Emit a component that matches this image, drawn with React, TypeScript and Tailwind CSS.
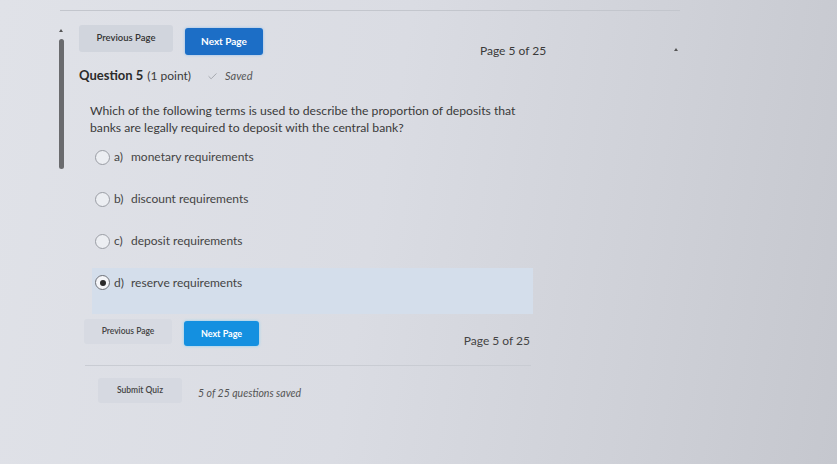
import React from "react";
import { Check } from "lucide-react";

const options = [
  { k: "a)", t: "monetary requirements" },
  { k: "b)", t: "discount requirements" },
  { k: "c)", t: "deposit requirements" },
];

function Radio({ on }: { on?: boolean }) {
  return (
    <div
      className={`w-[15px] h-[15px] rounded-full border flex items-center justify-center shrink-0 ${
        on ? "border-[#6d7077] bg-[#f4f5f8]" : "border-[#9a9da4] bg-[#eceef2]"
      }`}
    >
      {on && <div className="w-[6px] h-[6px] rounded-full bg-[#2a2a2a]" />}
    </div>
  );
}

export default function App() {
  return (
    <div className="w-[837px] h-[464px] overflow-hidden bg-[linear-gradient(100deg,#e0e2e8_0%,#dadce3_45%,#cfd1d8_75%,#c5c7ce_100%)] font-['Lato','Liberation_Sans',sans-serif] text-[#333]">
      <div className="pt-[10px] pl-[60px]">
        <div className="w-[620px] h-px bg-[#c3c6cd]" />
      </div>
      <div className="flex pl-[58px] pt-[14px]">
        {/* scrollbar */}
        <div className="w-[21px] flex flex-col items-start pl-[1px]">
          <div className="mt-[4px] w-0 h-0 border-l-[2.5px] border-r-[2.5px] border-b-[3px] border-l-transparent border-r-transparent border-b-[#555]" />
          <div className="mt-[7px] w-[5px] h-[130px] rounded-full bg-[#6a6b6e]" />
        </div>
        {/* content */}
        <div className="flex flex-col">
          <div className="flex items-start">
            <div className="w-[94px] h-[27px] rounded-[3px] bg-[#d1d5dd] flex items-center justify-center text-[9.5px] font-semibold text-[#333]">
              Previous Page
            </div>
            <div className="ml-[12px] mt-[3px] w-[78px] h-[27px] rounded-[3px] bg-[#1c6ec6] flex items-center justify-center text-[10px] font-bold text-white shadow-[0_0_3px_#8fbfee]">
              Next Page
            </div>
            <div className="ml-[217px] mt-[17px] text-[12px] text-[#3a3a3a]">Page 5 of 25</div>
            <div className="ml-[128px] mt-[23px] w-0 h-0 border-l-[2.5px] border-r-[2.5px] border-b-[3px] border-l-transparent border-r-transparent border-b-[#555]" />
          </div>

          <div className="mt-[7px] flex items-center h-[18px]">
            <span className="text-[13px] font-bold text-[#2b2b2b]">Question 5</span>
            <span className="ml-[4px] text-[12px] text-[#3a3a3a]">(1 point)</span>
            <Check size={11} strokeWidth={1.8} className="ml-[16px] text-[#9a9da3]" />
            <span className="ml-[7px] text-[11px] italic text-[#555]">Saved</span>
          </div>

          <div className="mt-[17px] ml-[11px] text-[12.2px] leading-[17px] text-[#3a3a3a]">
            Which of the following terms is used to describe the proportion of deposits that
            <br />
            banks are legally required to deposit with the central bank?
          </div>

          <div className="ml-[13px] w-[441px] flex flex-col">
            {options.map((o) => (
              <div key={o.k} className="h-[42px] flex items-center pl-[3px]">
                <Radio />
                <span className="ml-[4px] w-[17px] text-[12px] text-[#444]">{o.k}</span>
                <span className="text-[12px] text-[#444]">{o.t}</span>
              </div>
            ))}
            <div className="mt-[6px] h-[46px] bg-[#d4deeb] flex items-start pt-[7px] pl-[3px]">
              <div className="h-[15px] flex items-center">
                <Radio on />
                <span className="ml-[4px] w-[17px] text-[12px] text-[#444]">d)</span>
                <span className="text-[12px] text-[#444]">reserve requirements</span>
              </div>
            </div>
          </div>

          <div className="mt-[5px] ml-[5px] w-[446px] flex items-start">
            <div className="w-[88px] h-[25px] rounded-[3px] bg-[#d7dae2] flex items-center justify-center text-[8.5px] font-semibold text-[#444]">
              Previous Page
            </div>
            <div className="ml-[12px] mt-[2px] w-[75px] h-[25px] rounded-[3px] bg-[#1490e0] flex items-center justify-center text-[9px] font-bold text-white shadow-[0_0_3px_#7fd0f5]">
              Next Page
            </div>
            <div className="ml-auto mt-[13px] text-[12px] text-[#444]">Page 5 of 25</div>
          </div>

          <div className="mt-[15px] ml-[6px] w-[446px] h-px bg-[#c9ccd3]" />

          <div className="mt-[12px] ml-[19px] flex items-center">
            <div className="w-[84px] h-[25px] rounded-[3px] bg-[#d6d9e1] flex items-center justify-center text-[8.5px] font-semibold text-[#444]">
              Submit Quiz
            </div>
            <span className="ml-[16px] mt-[6px] text-[10.5px] italic text-[#555]">5 of 25 questions saved</span>
          </div>
        </div>
      </div>
    </div>
  );
}
